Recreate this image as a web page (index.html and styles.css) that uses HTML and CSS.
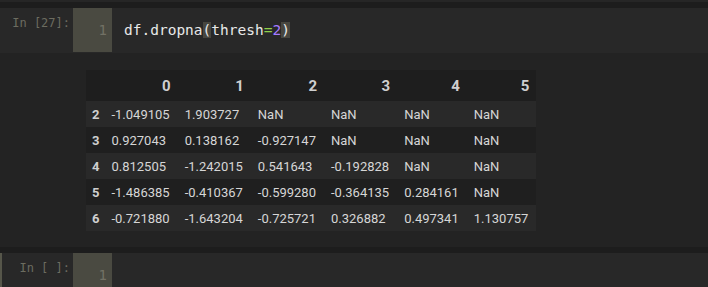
FILE: index.html
```html
<!DOCTYPE html>
<html lang="en">
<head>
    <meta charset="UTF-8">
    <title>Notebook</title>
    <link rel="stylesheet" href="styles.css">
</head>
<body>
    <div class="notebook">
        <div class="cell-gap"></div>

        <!-- Input cell -->
        <div class="cell">
            <div class="prompt">In [27]:</div>
            <div class="gutter">1</div>
            <div class="code">df.dropna<span class="bracket">(</span>thresh<span class="op">=</span><span class="num">2</span><span class="bracket">)</span></div>
        </div>

        <!-- Output -->
        <div class="output">
            <table class="dataframe">
                <thead>
                    <tr><th></th><th>0</th><th>1</th><th>2</th><th>3</th><th>4</th><th>5</th></tr>
                </thead>
                <tbody>
                    <tr><th>2</th><td>-1.049105</td><td>1.903727</td><td>NaN</td><td>NaN</td><td>NaN</td><td>NaN</td></tr>
                    <tr><th>3</th><td>0.927043</td><td>0.138162</td><td>-0.927147</td><td>NaN</td><td>NaN</td><td>NaN</td></tr>
                    <tr><th>4</th><td>0.812505</td><td>-1.242015</td><td>0.541643</td><td>-0.192828</td><td>NaN</td><td>NaN</td></tr>
                    <tr><th>5</th><td>-1.486385</td><td>-0.410367</td><td>-0.599280</td><td>-0.364135</td><td>0.284161</td><td>NaN</td></tr>
                    <tr><th>6</th><td>-0.721880</td><td>-1.643204</td><td>-0.725721</td><td>0.326882</td><td>0.497341</td><td>1.130757</td></tr>
                </tbody>
            </table>
        </div>

        <div class="cell-gap"></div>

        <!-- Empty selected cell -->
        <div class="cell selected">
            <div class="prompt">In [ ]:</div>
            <div class="gutter">1</div>
            <div class="code"></div>
        </div>
    </div>
</body>
</html>
```
FILE: styles.css
```css
* {
    margin: 0;
    padding: 0;
    box-sizing: border-box;
}

body {
    background-color: #232323;
    font-family: "DejaVu Sans Mono", monospace;
    overflow: hidden;
}

.notebook {
    border-top: 2px solid #262626;
}

.cell-gap {
    height: 6px;
    background-color: #1d1d1d;
}

/* Input cells */
.cell {
    display: flex;
    height: 45px;
    background-color: #282828;
    padding-bottom: 1px;
}

.cell.selected {
    height: 40px;
    border-left: 2px solid #56564a;
}

.prompt {
    width: 73px;
    padding: 7px 3px 0 0;
    text-align: right;
    font-size: 12px;
    line-height: 16px;
    color: #6c6c60;
}

.cell.selected .prompt {
    width: 71px;
}

.gutter {
    width: 39px;
    padding: 13px 5px 0 0;
    background-color: #4a4a41;
    text-align: right;
    font-size: 14px;
    line-height: 18px;
    color: #727165;
}

.code {
    padding: 13px 0 0 12px;
    font-size: 14.5px;
    line-height: 18px;
    color: #e8e8e8;
}

.code .bracket {
    background-color: #47463f;
}

.code .op {
    color: #8fd14a;
}

.code .num {
    color: #a57cff;
}

/* Output table */
.output {
    height: 194px;
    padding: 17px 0 0 86px;
}

.dataframe {
    border-collapse: collapse;
    font-family: Roboto, "Liberation Sans", sans-serif;
    font-size: 13px;
    color: #d6d6d6;
}

.dataframe thead th {
    height: 31px;
    padding: 0 7px;
    background-color: #1e1e1e;
    text-align: right;
    font-size: 15px;
    font-weight: bold;
    color: #cfcfcf;
}

.dataframe tbody tr {
    height: 26px;
    background-color: #292929;
}

.dataframe tbody tr:nth-child(even) {
    background-color: #1f1f1f;
}

.dataframe tbody th {
    padding: 0 5px 0 6px;
    text-align: left;
    font-weight: bold;
    color: #cfcfcf;
}

.dataframe td {
    padding: 0 8px 0 7px;
    text-align: left;
}
```
